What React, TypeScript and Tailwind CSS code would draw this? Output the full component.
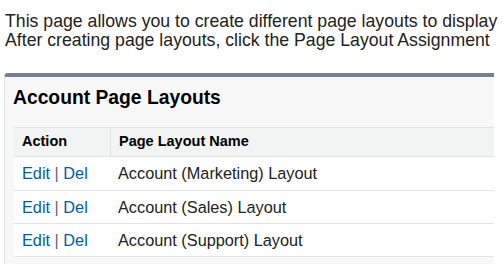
import React from 'react';

const layouts = [
    'Account (Marketing) Layout',
    'Account (Sales) Layout',
    'Account (Support) Layout',
];

const App: React.FC = () => {
    return (
        <div className="w-[503px] h-[264px] overflow-hidden bg-white font-['Liberation_Sans',Arial,sans-serif] text-[#222]">
            <div className="pl-[5px] pt-[12px] text-[17.7px] leading-[19px] whitespace-nowrap">
                <p>This page allows you to create different page layouts to display</p>
                <p>After creating page layouts, click the Page Layout Assignment</p>
            </div>

            <div className="mt-[23px] ml-[4px] w-[490px] h-[200px] bg-[#f8f8f8] border-t-4 border-l border-t-[#778196] border-l-[#e0e3e5] rounded-tl-[4px]">
                <h2 className="pl-[8px] pt-[10px] h-[50px] text-[19.3px] font-bold text-black leading-[22px]">
                    Account Page Layouts
                </h2>
                <div className="ml-[9px] bg-white">
                    <div className="flex h-[30px] items-center bg-[#f2f3f3] border-t border-b border-[#e0e3e5] text-[14.5px] font-bold text-black">
                        <div className="w-[97px] h-full flex items-center pl-[8px] border-r border-[#e0e3e5]">Action</div>
                        <div className="pl-[8px]">Page Layout Name</div>
                    </div>
                    {layouts.map((name, i) => (
                        <div
                            key={name}
                            className={`flex items-center border-b border-[#e3e3e3] text-[16.3px] ${i === 0 ? 'h-[34px]' : 'h-[33px]'}`}
                        >
                            <div className="w-[97px] pl-[8px] text-[#015ba7]">
                                Edit <span className="text-[#666]">|</span> Del
                            </div>
                            <div className="pl-[7px]">{name}</div>
                        </div>
                    ))}
                </div>
            </div>
        </div>
    );
};

export default App;
